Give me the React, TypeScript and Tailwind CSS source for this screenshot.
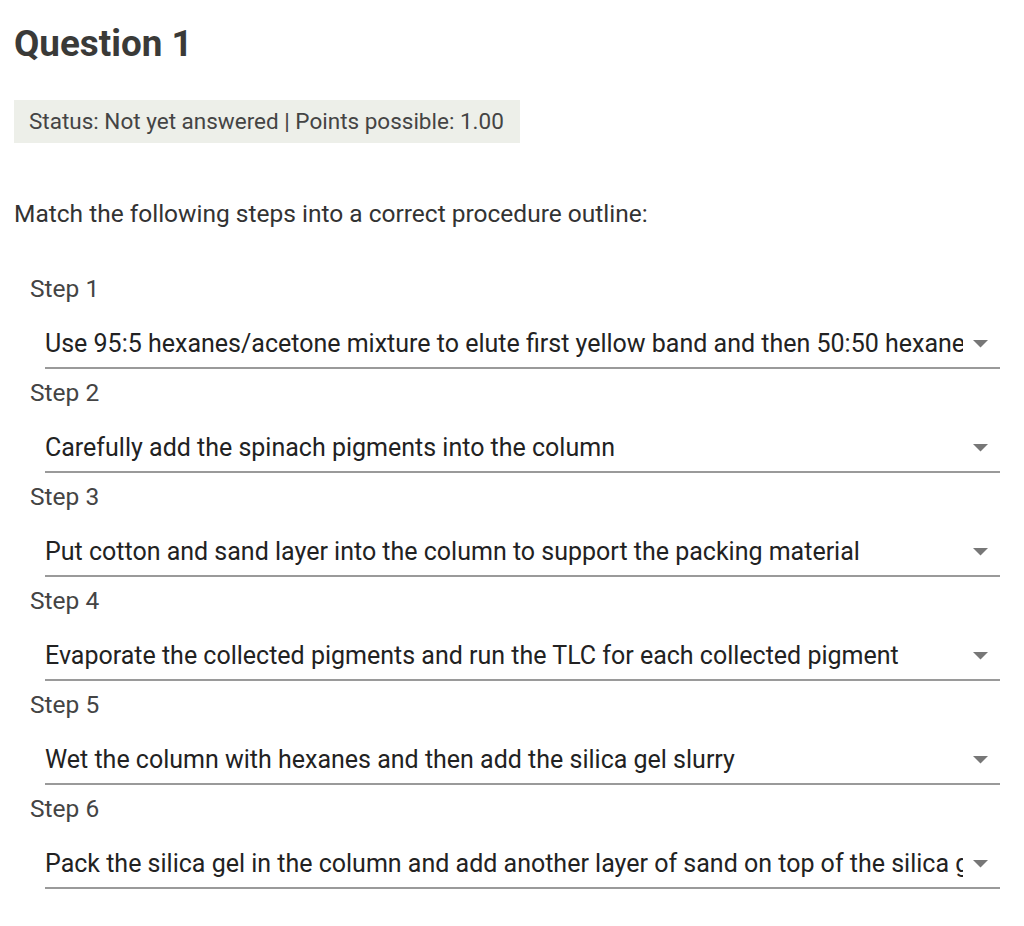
import React from "react";

const steps = [
  "Use 95:5 hexanes/acetone mixture to elute first yellow band and then 50:50 hexanes/acetone mixture to elute the second band",
  "Carefully add the spinach pigments into the column",
  "Put cotton and sand layer into the column to support the packing material",
  "Evaporate the collected pigments and run the TLC for each collected pigment",
  "Wet the column with hexanes and then add the silica gel slurry",
  "Pack the silica gel in the column and add another layer of sand on top of the silica gel",
];

function Arrow() {
  return (
    <svg width="15" height="8" viewBox="0 0 15 8" className="shrink-0">
      <path d="M0 0 L15 0 L7.5 7.5 Z" fill="#777" />
    </svg>
  );
}

export default function App() {
  return (
    <div
      className="min-h-[926px] w-[1024px] bg-white text-[#333]"
      style={{ fontFamily: "Roboto, 'Liberation Sans', sans-serif" }}
    >
      <div className="pl-[14px] pr-[24px] pt-[24px]">
        <h1 className="text-[36.8px] leading-[40px] font-bold text-[#3a3a38]">Question 1</h1>
        <div className="mt-[36px] inline-flex h-[43px] w-[506px] items-center bg-[#edefe9] px-[15px] text-[22.5px] text-[#444]">
          Status: Not yet answered | Points possible: 1.00
        </div>
        <p className="mt-[55px] text-[24.5px] leading-[32px] text-[#333]">
          Match the following steps into a correct procedure outline:
        </p>
        <div className="mt-[35px]">
          {steps.map((s, i) => (
            <div key={i} className="h-[104px]">
              <div className="ml-[16px] pt-[8px] text-[24.5px] leading-[32px] text-[#444]">
                Step {i + 1}
              </div>
              <div className="ml-[31px] w-[955px] flex items-center border-b-[2px] border-[#9a9a9a] pt-[23px] pb-[7px]">
                <div className="mr-[10px] flex-1 min-w-0 overflow-hidden whitespace-nowrap text-[25px] leading-[32px] text-[#222]">
                  {s}
                </div>
                <div className="mr-[12px] flex items-center">
                  <Arrow />
                </div>
              </div>
            </div>
          ))}
        </div>
      </div>
    </div>
  );
}
